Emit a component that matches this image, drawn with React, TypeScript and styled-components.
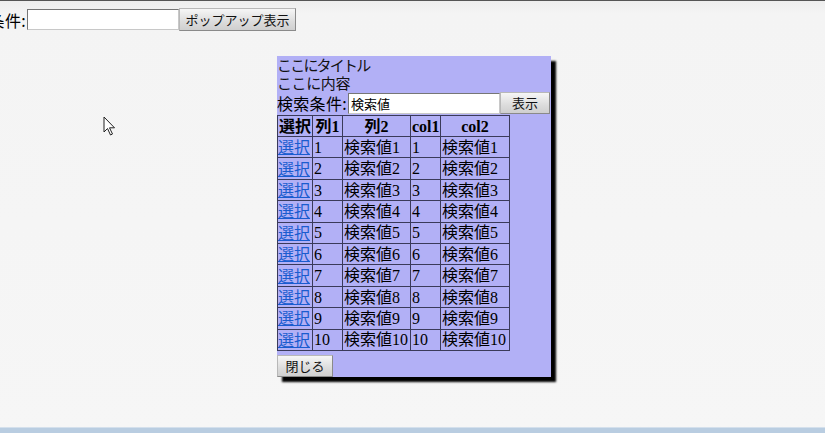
import React from 'react';
import styled, { createGlobalStyle } from 'styled-components';

const GlobalStyle = createGlobalStyle`
  html, body {
    margin: 0;
    padding: 0;
    background: #f4f4f4;
    overflow: hidden;
  }
`;

const gothic = `"Noto Sans CJK JP", "Noto Sans", sans-serif`;
const serif = `"Liberation Serif", "Noto Sans CJK JP", serif`;

const Page = styled.div`
  position: relative;
  width: 825px;
  height: 433px;
  display: flex;
  flex-direction: column;
  border-top: 1px solid #555;
  box-sizing: border-box;
  background: linear-gradient(#eeeeee 0, #f4f4f4 12px, #f6f6f6 100%);
  font-family: ${gothic};
  color: #000;
`;

const Main = styled.div`
  flex: 1;
`;

const BottomBand = styled.div`
  height: 5px;
  background: #b9cde1;
  border-top: 1px solid #d4e0ec;
`;

const SearchBar = styled.div`
  display: flex;
  align-items: center;
  height: 23px;
  margin: 7px 0 0 -44px;
`;

const Label = styled.span`
  flex: 0 0 71px;
  font-size: 16px;
  line-height: 18px;
  white-space: nowrap;
  letter-spacing: 0.3px;
`;

const TextBox = styled.input<{ $w: number }>`
  box-sizing: border-box;
  width: ${(p) => p.$w}px;
  height: 21px;
  margin: 0;
  padding: 0 2px;
  border: 1px solid #767676;
  border-right-color: #c8c8c8;
  border-bottom-color: #c8c8c8;
  background: #fff;
  font-family: ${gothic};
  font-size: 13px;
  line-height: 19px;
  outline: none;
`;

const Button = styled.button<{ $w: number; $h?: number }>`
  box-sizing: border-box;
  width: ${(p) => p.$w}px;
  height: ${(p) => p.$h ?? 23}px;
  margin: 0;
  padding: 0;
  border: 1px solid #8a8a8a;
  border-top-color: #b8b8b8;
  border-left-color: #b8b8b8;
  background: linear-gradient(#f6f6f6, #dcdcdc 60%, #cfcfcf);
  font-family: ${gothic};
  font-size: 13px;
  line-height: 20px;
  color: #111;
`;

const Popup = styled.div`
  position: absolute;
  left: 277px;
  top: 55px;
  width: 274px;
  height: 321px;
  background: #b2b0f6;
  box-shadow: 5px 5px 2px #000;
  display: flex;
  flex-direction: column;
`;

const Line = styled.div<{ $tight?: boolean }>`
  font-size: 15px;
  line-height: 18px;
  height: 18px;
  white-space: nowrap;
  letter-spacing: ${(p) => (p.$tight ? '-1.8px' : '-0.4px')};
  color: #111;
`;

const PopupSearch = styled.div`
  display: flex;
  align-items: center;
  height: 23px;
`;

const Grid = styled.table`
  border-collapse: collapse;
  table-layout: fixed;
  border: 1px solid #3a3a5a;
  margin-top: 1px;
  width: 232px;
  font-family: ${serif};
  font-size: 16px;
`;

const HeadCell = styled.th<{ $w: number; $flush?: boolean }>`
  width: ${(p) => p.$w}px;
  border: 1px solid #3a3a5a;
  padding: ${(p) => (p.$flush ? '0' : '0 1px')};
  height: 20px;
  line-height: 19px;
  font-weight: bold;
  text-align: center;
  white-space: nowrap;
`;

const Cell = styled.td<{ $flush?: boolean }>`
  border: 1px solid #3a3a5a;
  padding: ${(p) => (p.$flush ? '0' : '0 1px')};
  height: 20.4px;
  line-height: 19px;
  white-space: nowrap;
`;

const Pick = styled.a`
  color: #1a5ccf;
  text-decoration: underline;
  font-family: ${gothic};
`;

const CloseRow = styled.div`
  padding-top: 1px;
`;

const Cursor = styled.svg`
  position: absolute;
  left: 103px;
  top: 115px;
`;

const rows = Array.from({ length: 10 }, (_, i) => i + 1);

export default function App() {
  return (
    <>
      <GlobalStyle />
      <Page>
        <Main>
          <SearchBar>
            <Label>検索条件:</Label>
            <TextBox $w={152} />
            <Button $w={117}>ポップアップ表示</Button>
          </SearchBar>
        </Main>
        <BottomBand />

        <Popup>
          <Line $tight>ここにタイトル</Line>
          <Line>ここに内容</Line>
          <PopupSearch>
            <Label>検索条件:</Label>
            <TextBox $w={152} defaultValue="検索値" />
            <Button $w={50} $h={22}>表示</Button>
          </PopupSearch>
          <Grid>
            <thead>
              <tr>
                <HeadCell $w={34} $flush>選択</HeadCell>
                <HeadCell $w={27}>列1</HeadCell>
                <HeadCell $w={65}>列2</HeadCell>
                <HeadCell $w={27}>col1</HeadCell>
                <HeadCell $w={66}>col2</HeadCell>
              </tr>
            </thead>
            <tbody>
              {rows.map((n) => (
                <tr key={n}>
                  <Cell $flush>
                    <Pick href="#">選択</Pick>
                  </Cell>
                  <Cell>{n}</Cell>
                  <Cell>検索値{n}</Cell>
                  <Cell>{n}</Cell>
                  <Cell>検索値{n}</Cell>
                </tr>
              ))}
            </tbody>
          </Grid>
          <CloseRow>
            <Button $w={56} $h={22}>閉じる</Button>
          </CloseRow>
        </Popup>

        <Cursor width="14" height="22" viewBox="0 0 14 22">
          <path
            d="M1 1 L1 16 L4.5 12.5 L7.5 19 L9.5 18 L6.5 11.8 L11.5 11.8 Z"
            fill="#fff"
            stroke="#222"
            strokeWidth="1"
            strokeLinejoin="miter"
          />
        </Cursor>
      </Page>
    </>
  );
}
